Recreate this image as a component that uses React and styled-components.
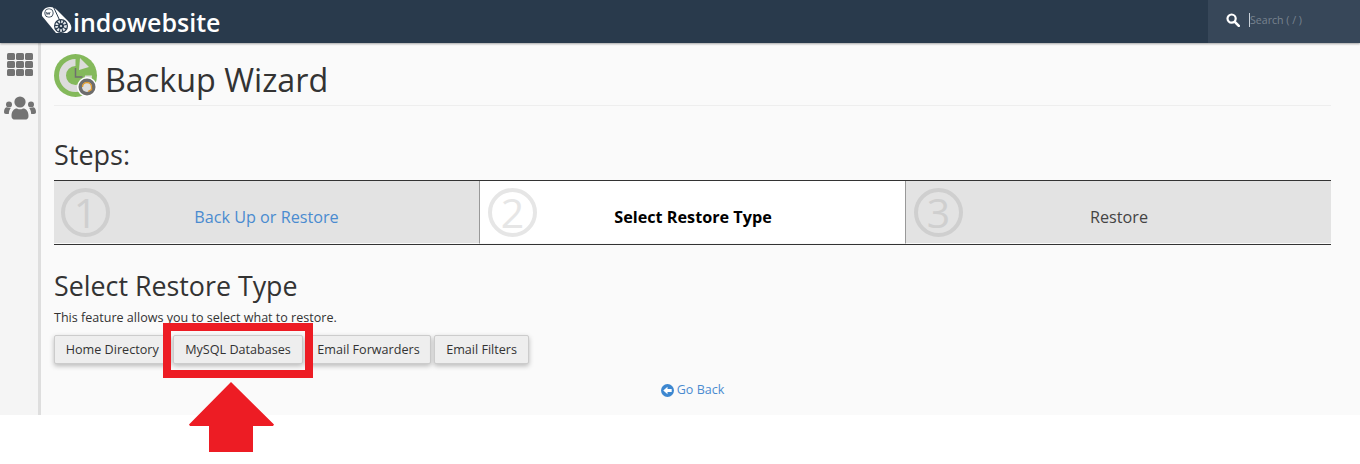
import React from "react"
import styled, { createGlobalStyle } from "styled-components"

const GlobalStyle = createGlobalStyle`
  html, body {
    margin: 0;
    padding: 0;
    background: #fff;
    font-family: "Open Sans", "Liberation Sans", sans-serif;
    color: #333;
  }
`

const Page = styled.div`
  position: relative;
  width: 1360px;
  height: 464px;
  overflow: hidden;
  background: #fff;
`

const TopBar = styled.header`
  position: relative;
  z-index: 2;
  height: 43px;
  display: flex;
  align-items: stretch;
  justify-content: space-between;
  padding-left: 41px;
  background: #293a4c;
  box-shadow: 0 1px 2px rgba(0, 0, 0, 0.35);
`

const Brand = styled.div`
  display: flex;
  align-items: flex-start;
  padding-top: 7px;
`

const BrandName = styled.span`
  font-size: 25px;
  line-height: 30px;
  font-weight: 600;
  color: #fff;
`

const SearchBox = styled.div`
  width: 152px;
  display: flex;
  align-items: center;
  padding-left: 18px;
  padding-bottom: 3px;
  box-sizing: border-box;
  background: #374759;
`

const SearchText = styled.span`
  margin-left: 9px;
  border-left: 1px solid #c9d1d9;
  font-size: 10.6px;
  line-height: 14px;
  color: #77838f;
`

const Body = styled.div`
  height: 372px;
  display: flex;
`

const SideBar = styled.nav`
  width: 41px;
  flex: none;
  display: flex;
  flex-direction: column;
  align-items: center;
  gap: 20px;
  padding: 10px 0 0 1px;
  box-sizing: border-box;
  background: #f5f5f5;
  border-right: 3px solid #dedede;
`

const Content = styled.main`
  flex: 1;
  padding: 8px 29px 0 13px;
  background: #fafafa;
`

const TitleRow = styled.div`
  height: 55px;
  display: flex;
  align-items: flex-start;
  gap: 7px;
  padding-top: 3px;
  box-sizing: border-box;
  border-bottom: 1px solid #eee;
`

const Title = styled.h1`
  margin: 3px 0 0 -1px;
  font-size: 32.3px;
  line-height: 44px;
  font-weight: 400;
  color: #333;
`

const StepsHeading = styled.h2`
  margin: 31px 0 7px;
  font-size: 27px;
  line-height: 36px;
  font-weight: 400;
  color: #333;
`

const Stepper = styled.div`
  height: 65px;
  display: grid;
  grid-template-columns: 425px 426px 1fr;
  box-sizing: border-box;
  border-top: 1px solid #333;
  border-bottom: 1px solid #333;
`

const Step = styled.div`
  position: relative;
  display: flex;
  align-items: center;
  justify-content: center;
  padding-top: 9px;
  padding-left: ${({ $first }) => ($first ? "0" : "1px")};
  box-sizing: border-box;
  font-size: 16.2px;
  background: ${({ $active }) => ($active ? "#fff" : "#e3e3e3")};
  border-left: ${({ $first }) => ($first ? "0" : "1px solid #999")};
  border-bottom: 1px solid #fafafa;
  font-weight: ${({ $active }) => ($active ? 700 : 400)};
  color: ${({ $active, $link }) => ($active ? "#000" : $link ? "#4a8bd0" : "#444")};
`

const StepNumber = styled.span`
  position: absolute;
  left: ${({ $first }) => ($first ? "7px" : "8px")};
  top: 7px;
  width: 49px;
  height: 49px;
  box-sizing: border-box;
  display: flex;
  align-items: center;
  justify-content: center;
  border: 4px solid ${({ $active }) => ($active ? "#e6e6e6" : "#cfcfcf")};
  border-radius: 50%;
  font-size: 41px;
  line-height: 1;
  font-weight: 400;
  color: ${({ $active }) => ($active ? "#e6e6e6" : "#cfcfcf")};
`

const SectionHeading = styled.h2`
  margin: 23px 0 0;
  font-size: 26.8px;
  line-height: 36px;
  font-weight: 400;
  color: #333;
`

const Description = styled.p`
  margin: 5px 0 0;
  font-size: 12.55px;
  line-height: 18px;
  color: #333;
`

const ButtonRow = styled.div`
  display: flex;
  gap: 3px;
  margin-top: 8px;
`

const RestoreButton = styled.button`
  height: 29px;
  padding: 0 10.75px;
  font-family: inherit;
  font-size: 12.6px;
  color: #333;
  background: #eee;
  border: 1px solid #ccc;
  border-radius: 2px;
  box-shadow: 0 2px 5px rgba(0, 0, 0, 0.26);
`

const GoBack = styled.a`
  display: flex;
  align-items: center;
  justify-content: center;
  gap: 3px;
  margin-top: 17px;
  font-size: 12.5px;
  line-height: 18px;
  color: #4a8bd0;
`

const RedBox = styled.div`
  position: absolute;
  left: 163px;
  top: 323px;
  width: 150px;
  height: 55px;
  box-sizing: border-box;
  border: 8px solid #ed1c24;
`

const RedArrow = styled.svg`
  position: absolute;
  left: 188px;
  top: 381px;
`

const LogoMark = () => (
  <svg width="32" height="28" viewBox="0 0 32 28">
    <path d="M1 9C0 4 4 0 9 0c3 0 5 1 7 3l11 11c3 3 4 6 3 9l-4 3H15z" fill="#fff" />
    <path d="M12-1l7 15" stroke="#293a4c" strokeWidth="1" />
    <circle cx="20" cy="19" r="7" fill="#293a4c" />
    <circle cx="20" cy="19" r="4.4" fill="none" stroke="#dfe3e7" strokeWidth="2.8" strokeDasharray="1.8 1.1" />
    <circle cx="20" cy="19" r="1.1" fill="#dfe3e7" />
    <circle cx="8" cy="6" r="4.6" fill="#293a4c" />
    <circle cx="8" cy="6" r="3.7" fill="#fff" />
    <path d="M5.2 5l.9 2.5 1-2 1 2 1-2.5" fill="none" stroke="#293a4c" strokeWidth=".8" />
  </svg>
)

const SearchIcon = () => (
  <svg width="14" height="14" viewBox="0 0 14 14">
    <circle cx="5.6" cy="5.6" r="4.1" fill="none" stroke="#fff" strokeWidth="2.2" />
    <path d="M8.8 8.8l4 4" stroke="#fff" strokeWidth="2.6" strokeLinecap="round" />
  </svg>
)

const GridIcon = () => (
  <svg width="26" height="23" viewBox="0 0 26 23" fill="#737373">
    {[0, 9, 18].map(x =>
      [0, 8, 16].map(y => <rect key={`${x}-${y}`} x={x} y={y} width="8" height="7" rx="1.5" />)
    )}
  </svg>
)

const UsersIcon = () => (
  <svg width="32" height="24" viewBox="0 0 32 24" fill="#737373">
    <circle cx="16" cy="6" r="5.6" />
    <path d="M7.500 20c0-5 2.500-7.600 5.500-7.600 1 .6 2 .9 3 .9s2-.3 3-.9c3 0 5.500 2.600 5.500 7.600 0 2.600-1.500 3.600-3.500 3.600H11c-2 0-3.500-1-3.500-3.600z" />
    <circle cx="5" cy="8.5" r="3" />
    <circle cx="27" cy="8.5" r="3" />
    <path d="M0 16c0-3 1.300-4.700 3-4.700 1.300.8 2.700.8 4 .4-1.300 1.400-2 3.500-2.200 6.300H2c-1.300 0-2-.7-2-2z" />
    <path d="M32 16c0-3-1.300-4.700-3-4.700-1.300.8-2.700.8-4 .4 1.300 1.400 2 3.500 2.200 6.300H30c1.300 0 2-.7 2-2z" />
  </svg>
)

const BackupIcon = () => (
  <svg width="45" height="45" viewBox="0 0 45 45">
    <circle cx="21.5" cy="21.5" r="21.5" fill="#84b95b" />
    <path d="M21.5 8.5a13 13 0 1 0 13 13" fill="none" stroke="#dcdcdc" strokeWidth="7" />
    <path d="M26 4l9 9-10 3z" fill="#dcdcdc" />
    <path d="M21.5 14v9h7" fill="none" stroke="#6f6f6f" strokeWidth="1.5" />
    <circle cx="33" cy="33" r="10" fill="#fff" />
    <circle cx="33" cy="33" r="8.5" fill="#6d6d6d" />
    <circle cx="33" cy="33" r="5" fill="#ddd" />
    <path d="M28.500 33a4.500 4.500 0 0 1 9 0v2.500l-3.500 2" fill="none" stroke="#e09a2a" strokeWidth="1.3" />
  </svg>
)

const BackIcon = () => (
  <svg width="13" height="13" viewBox="0 0 13 13">
    <circle cx="6.5" cy="6.5" r="6.5" fill="#3d87d0" />
    <path d="M2.300 6.500L6.500 2.800v2.200h4.200v3H6.500v2.200z" fill="#fff" />
  </svg>
)

const steps = [
  { number: 1, label: "Back Up or Restore", link: true },
  { number: 2, label: "Select Restore Type", active: true },
  { number: 3, label: "Restore" }
]

const buttons = ["Home Directory", "MySQL Databases", "Email Forwarders", "Email Filters"]

const App = () => (
  <Page>
    <GlobalStyle />
    <TopBar>
      <Brand>
        <LogoMark />
        <BrandName>indowebsite</BrandName>
      </Brand>
      <SearchBox>
        <SearchIcon />
        <SearchText>Search ( / )</SearchText>
      </SearchBox>
    </TopBar>
    <Body>
      <SideBar>
        <GridIcon />
        <UsersIcon />
      </SideBar>
      <Content>
        <TitleRow>
          <BackupIcon />
          <Title>Backup Wizard</Title>
        </TitleRow>
        <StepsHeading>Steps:</StepsHeading>
        <Stepper>
          {steps.map((step, i) => (
            <Step key={step.number} $first={i === 0} $active={step.active} $link={step.link}>
              <StepNumber $first={i === 0} $active={step.active}>{step.number}</StepNumber>
              {step.label}
            </Step>
          ))}
        </Stepper>
        <SectionHeading>Select Restore Type</SectionHeading>
        <Description>This feature allows you to select what to restore.</Description>
        <ButtonRow>
          {buttons.map(label => (
            <RestoreButton key={label}>{label}</RestoreButton>
          ))}
        </ButtonRow>
        <GoBack>
          <BackIcon />
          Go Back
        </GoBack>
      </Content>
    </Body>
    <RedBox />
    <RedArrow width="88" height="72" viewBox="0 0 88 72">
      <path d="M43 1L86 43.500 85 45H65V71H21V45H2L1 43.500z" fill="#ed1c24" />
    </RedArrow>
  </Page>
)

export default App
